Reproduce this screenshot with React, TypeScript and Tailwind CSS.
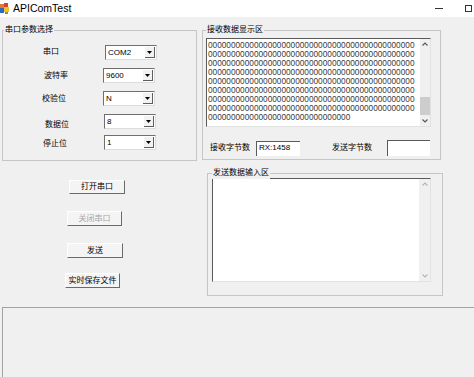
import React from "react";

const FONT = "font-[Liberation_Sans,Noto_Sans_CJK_SC,sans-serif]";

const rows = [
  { label: "串口", value: "COM2", lc: "pl-[40px] -translate-y-[1px]", cc: "ml-[1px]", rc: "mt-[14px]" },
  { label: "波特率", value: "9600", lc: "pl-[41px]", cc: "-ml-[1px]", rc: "mt-[8px]" },
  { label: "校验位", value: "N", lc: "pl-[39px]", cc: "-ml-[1px]", rc: "mt-[8px]" },
  { label: "数据位", value: "8", lc: "pl-[42px] translate-y-[3px]", cc: "", rc: "mt-[8px]" },
  { label: "停止位", value: "1", lc: "pl-[40px] translate-y-[1px]", cc: "", rc: "mt-[6px]" },
];

function Combo({ value, className }: { value: string; className: string }) {
  return (
    <div
      className={`w-[52px] h-[15px] bg-white border-t border-l border-[#6f6f6f] border-r border-b border-r-[#dcdcdc] border-b-[#dcdcdc] flex items-center ${className}`}
    >
      <span className="pl-[2px] text-[8px] leading-none text-black">{value}</span>
      <div className="ml-auto mr-[1px] w-[10px] h-[11px] bg-[#f2f2f2] border-r border-b border-[#5e5e5e] flex items-center justify-center">
        <svg width="5" height="3" viewBox="0 0 5 3">
          <polygon points="0,0 5,0 2.5,3" fill="#000" />
        </svg>
      </div>
    </div>
  );
}

function Btn({ text, className, disabled }: { text: string; className: string; disabled?: boolean }) {
  return (
    <div
      className={`flex items-center justify-center bg-[#f4f4f4] border-t border-l border-white border-r border-b border-r-[#6a6a6a] border-b-[#6a6a6a] text-[8px] leading-none ${
        disabled ? "text-[#a8a8a8]" : "text-black"
      } ${className}`}
    >
      {text}
    </div>
  );
}

function Chevron({ up, color }: { up: boolean; color: string }) {
  return (
    <svg width="6" height="4" viewBox="0 0 6 4">
      <polyline
        points={up ? "0.5,3.5 3,1 5.5,3.5" : "0.5,0.5 3,3 5.5,0.5"}
        fill="none"
        stroke={color}
        strokeWidth="1.1"
      />
    </svg>
  );
}

const full = "0".repeat(45);
const lines = [full, full, full, full, full, full, full, full, "0".repeat(31)];

export default function App() {
  return (
    <div className={`w-[474px] h-[377px] bg-[#f0f0f0] flex flex-col overflow-hidden ${FONT}`}>
      {/* Title bar */}
      <div className="h-[17px] bg-white flex items-center shrink-0">
        <svg width="10" height="11" viewBox="0 0 10 11" className="shrink-0">
          <rect x="0" y="1" width="4" height="4" fill="#e07b2e" />
          <rect x="4" y="0" width="4" height="4" fill="#d9412b" />
          <rect x="0" y="5" width="4" height="5" fill="#2f66c2" />
          <rect x="4" y="4" width="5" height="5" fill="#f0bf2c" />
          <rect x="5" y="9" width="3" height="2" fill="#7a9a3a" />
        </svg>
        <span className="ml-[3px] text-[10.5px] leading-none text-black">APIComTest</span>
        <div className="ml-auto flex items-center">
          <div className="w-[8px] h-px bg-[#333]" />
          <div className="ml-[22px] mr-[2px] w-[7px] h-[7px] border border-[#333]" />
        </div>
      </div>

      {/* Main */}
      <div className="h-[290px] flex shrink-0">
        {/* Left column */}
        <div className="w-[200px] pl-[2px] flex flex-col items-start shrink-0">
          <div className="relative mt-[13px] w-[195px] h-[131px] border border-[#c6c6c6] flex flex-col">
            <span className="absolute -top-[7px] left-[1px] px-[1px] bg-[#f0f0f0] text-[8px] leading-[12px] text-black">
              串口参数选择
            </span>
            {rows.map((r) => (
              <div key={r.label} className={`flex items-center ${r.rc}`}>
                <div className={`w-[101px] shrink-0 text-[8px] leading-none text-black ${r.lc}`}>{r.label}</div>
                <Combo value={r.value} className={r.cc} />
              </div>
            ))}
          </div>
          <Btn text="打开串口" className="mt-[19px] ml-[67px] w-[56px] h-[14px]" />
          <Btn text="关闭串口" disabled className="mt-[17px] ml-[65px] w-[55px] h-[15px]" />
          <Btn text="发送" className="mt-[17px] ml-[65px] w-[56px] h-[15px]" />
          <Btn text="实时保存文件" className="mt-[15px] ml-[63px] w-[55px] h-[15px]" />
        </div>

        {/* Right column */}
        <div className="flex-1 flex flex-col items-start">
          {/* Receive group */}
          <div className="relative ml-[2px] mt-[13px] w-[239px] h-[130px] border border-[#c6c6c6] flex flex-col items-start">
            <span className="absolute -top-[7px] left-[3px] px-[1px] bg-[#f0f0f0] text-[8px] leading-[12px] text-black">
              接收数据显示区
            </span>
            <div className="ml-[3px] mt-[7px] w-[225px] h-[89px] bg-white border-t border-l border-[#5a5a5a] border-r border-b border-r-[#e2e2e2] border-b-[#e2e2e2] flex">
              <div className="flex-1 pl-[1px] pt-[2px] text-[8.25px] leading-[9px] text-[#3a3a3a] whitespace-pre overflow-hidden">
                {lines.map((l, i) => (
                  <div key={i}>{l}</div>
                ))}
              </div>
              <div className="w-[10px] bg-[#f0f0f0] flex flex-col">
                <div className="h-[10px] flex items-center justify-center">
                  <Chevron up color="#555" />
                </div>
                <div className="flex-1 flex flex-col justify-end pb-[1px]">
                  <div className="h-[18px] bg-[#cdcdcd]" />
                </div>
                <div className="h-[10px] flex items-center justify-center">
                  <Chevron up={false} color="#555" />
                </div>
              </div>
            </div>
            <div className="mt-[13px] flex items-center">
              <div className="ml-[7px] w-[46px] text-[8px] leading-none text-black">接收字节数</div>
              <div className="w-[44px] h-[15px] bg-white border-t border-l border-[#5a5a5a] text-[8px] leading-none text-black pl-[2px] pt-[2px]">
                RX:1458
              </div>
              <div className="ml-[32px] w-[55px] text-[8px] leading-none text-black">发送字节数</div>
              <div className="w-[43px] h-[16px] bg-white border-t border-l border-[#5a5a5a]" />
            </div>
          </div>

          {/* Send group */}
          <div className="relative ml-[7px] mt-[13px] w-[236px] h-[123px] border border-[#c6c6c6] flex flex-col items-start">
            <span className="absolute -top-[7px] left-[4px] px-[1px] bg-[#f0f0f0] text-[8px] leading-[12px] text-black">
              发送数据输入区
            </span>
            <div className="ml-[4px] mt-[4px] w-[219px] h-[104px] bg-white border-t border-l border-[#5a5a5a] border-r border-b border-r-[#e2e2e2] border-b-[#e2e2e2] flex">
              <div className="flex-1" />
              <div className="w-[11px] bg-[#f0f0f0] flex flex-col">
                <div className="h-[10px] flex items-center justify-center">
                  <Chevron up color="#b5b5b5" />
                </div>
                <div className="flex-1" />
                <div className="h-[10px] flex items-center justify-center">
                  <Chevron up={false} color="#b5b5b5" />
                </div>
              </div>
            </div>
          </div>
        </div>
      </div>

      {/* Bottom panel */}
      <div className="ml-[2px] flex-1 border-t border-l border-[#a3a3a3] bg-[#f0f0f0]" />
    </div>
  );
}
